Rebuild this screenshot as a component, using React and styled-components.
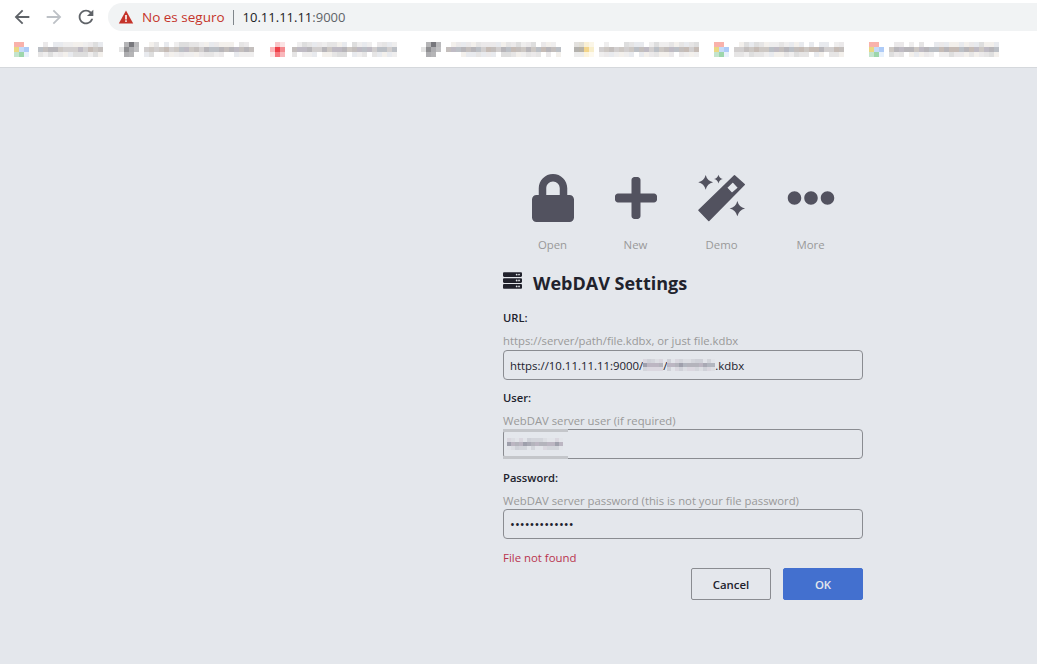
import React from "react";
import styled, { createGlobalStyle } from "styled-components";
import { FaLock, FaPlus, FaEllipsisH, FaServer } from "react-icons/fa";

const GlobalStyle = createGlobalStyle`
  html, body {
    margin: 0;
    padding: 0;
    height: 100%;
    overflow: hidden;
    background: #e4e7ec;
    font-family: "Open Sans", "Noto Sans", sans-serif;
  }
`;

const Page = styled.div`
  width: 1037px;
  height: 664px;
  display: flex;
  flex-direction: column;
  background: #e4e7ec;
`;

const Toolbar = styled.div`
  height: 31px;
  padding-top: 3px;
  box-sizing: border-box;
  display: flex;
  align-items: stretch;
  background: #fff;
`;

const NavIcons = styled.div`
  width: 108px;
  flex: none;
  display: flex;
  align-items: center;
  gap: 10px;
  padding: 0 0 0 11px;
  box-sizing: border-box;
`;

const NavIcon = styled.svg`
  width: 22px;
  height: 22px;
  fill: ${(p) => p.$color || "#5f6368"};
`;

const AddressBar = styled.div`
  flex: 1;
  display: flex;
  align-items: center;
  background: #f1f3f4;
  border-radius: 14px 0 0 14px;
  padding-left: 10px;
  font-size: 13px;
`;

const WarnIcon = styled.svg`
  width: 16px;
  height: 16px;
  margin-right: 8px;
`;

const NotSecure = styled.span`
  color: #c5332a;
  font-size: 13.5px;
`;

const Divider = styled.span`
  width: 1px;
  height: 15px;
  background: #80868b;
  margin: 0 9px 0 8px;
`;

const Host = styled.span`
  color: #202124;
`;

const Port = styled.span`
  color: #5f6368;
`;

const Bookmarks = styled.div`
  height: 37px;
  box-sizing: border-box;
  display: flex;
  align-items: center;
  background: #fff;
  border-bottom: 1px solid #d5d8dc;
  padding-left: 14px;
`;

const Bookmark = styled.div`
  display: flex;
  align-items: center;
  gap: ${(p) => p.$gap}px;
  width: ${(p) => p.$width}px;
  flex: none;
`;

const Mosaic = styled.div`
  display: grid;
  flex: none;
  grid-template-columns: repeat(${(p) => p.$cols}, ${(p) => p.$cell}px);
  grid-auto-rows: ${(p) => p.$cell}px;
`;

const Main = styled.main`
  flex: 1;
  display: flex;
  justify-content: flex-start;
  padding: 106px 0 0 503px;
  box-sizing: border-box;
`;

const Panel = styled.div`
  width: 360px;
  display: flex;
  flex-direction: column;
`;

const Actions = styled.div`
  display: flex;
  justify-content: center;
  gap: 41px;
`;

const Action = styled.div`
  width: ${(p) => p.$width}px;
  display: flex;
  flex-direction: column;
  align-items: center;
  color: #52525f;
  svg {
    width: ${(p) => p.$width}px;
    height: 48px;
    display: block;
  }
`;

const ActionLabel = styled.div`
  margin-top: 15px;
  font-size: 11.4px;
  line-height: 16px;
  color: #999;
  white-space: nowrap;
`;

const Heading = styled.h1`
  margin: 15px 0 0;
  display: flex;
  align-items: center;
  gap: 11px;
  font-size: 18px;
  line-height: 30px;
  font-weight: 700;
  color: #21222c;
  svg {
    font-size: 19px;
    margin-top: -5px;
  }
`;

const Label = styled.div`
  margin-top: ${(p) => p.$top}px;
  font-size: 11.2px;
  line-height: 16px;
  font-weight: 600;
  color: #21222c;
`;

const Hint = styled.div`
  margin: 7px 0 ${(p) => p.$bottom || 0}px;
  font-size: 11.3px;
  line-height: 16px;
  color: #999;
`;

const Field = styled.div`
  position: relative;
  height: 30px;
  box-sizing: border-box;
  display: flex;
  align-items: center;
  padding: 0 6px;
  border: 1px solid #8a8c91;
  border-radius: 4px;
  font-size: 11.4px;
  color: #21222c;
`;

const PasswordField = styled(Field)`
  font-size: 13px;
`;

const BorderSmudge = styled.div`
  position: absolute;
  left: -1px;
  ${(p) => (p.$bottom ? "bottom: -1px;" : "top: -1px;")}
  width: 65px;
  height: 3px;
  background: #c4c6ca;
`;

const UserBlur = styled.div`
  margin-left: -3px;
`;

const ErrorText = styled.div`
  margin-top: 11px;
  font-size: 11.4px;
  line-height: 16px;
  color: #b9344e;
`;

const Buttons = styled.div`
  margin-top: 2px;
  display: flex;
  justify-content: flex-end;
  gap: 12px;
`;

const Button = styled.button`
  width: 80px;
  height: 32px;
  box-sizing: border-box;
  padding: 0;
  border-radius: 2px;
  border: 1px solid ${(p) => (p.$primary ? "#4370cf" : "#8a8c91")};
  background: ${(p) => (p.$primary ? "#4370cf" : "transparent")};
  color: ${(p) => (p.$primary ? "#e4e7ec" : "#21222c")};
  font-family: inherit;
  font-size: 11.4px;
  font-weight: 600;
`;

// little seeded generator, so the pixelated bits look the same on every run
function makeCells(seed, cols, strong, faint) {
  const cells = [];
  let s = seed;
  for (let i = 0; i < cols * 3; i++) {
    s = (s * 16807) % 2147483647;
    const middle = i >= cols && i < cols * 2;
    const list = middle ? strong : faint;
    cells.push(list[s % list.length]);
  }
  return cells;
}

const barStrong = ["#c4bfbd", "#b8b6ba", "#cdc8c4", "#bcc0c6", "#c6bcb6", "#d2cfcf", "#bfbbc4"];
const barFaint = ["#fff", "#efeeee", "#e6e5e5", "#dedede", "#f3f0ec", "#e8eaee", "#ebe9ea"];
const fieldStrong = ["#a9a9b4", "#b4b4bc", "#9fa0ac", "#bcb6c2", "#b2b6bf"];
const fieldFaint = ["#dcdee3", "#d3d5db", "#e2e4e9", "#cfd1d8", "#dad7df"];

function TextBlur({ seed, cols, cell = 5, strong = barStrong, faint = barFaint }) {
  return (
    <Mosaic $cols={cols} $cell={cell}>
      {makeCells(seed, cols, strong, faint).map((c, i) => (
        <div key={i} style={{ background: c }} />
      ))}
    </Mosaic>
  );
}

function Favicon({ colors }) {
  return (
    <Mosaic $cols={colors.length / 3} $cell={5}>
      {colors.map((c, i) => (
        <div key={i} style={{ background: c }} />
      ))}
    </Mosaic>
  );
}

function WandIcon() {
  return (
    <svg viewBox="0 0 50 50">
      <path
        fillRule="evenodd"
        stroke="currentColor"
        strokeWidth="1.5"
        strokeLinejoin="round"
        d="M1 37.7L11.3 48.5 48.2 11 38 1.8zM29.7 14.3L36.3 7.7 42.3 14.3 35.3 20.3z"
        fill="currentColor"
      />
      <path d="M8 1Q9.6 7.1 15.7 8.7 9.6 10.3 8 16.4 6.4 10.3 .3 8.7 6.4 7.1 8 1z" fill="currentColor" />
      <path d="M21.3 .8Q22.2 4.4 25.8 5.3 22.2 6.2 21.3 9.8 20.4 6.2 16.8 5.3 20.4 4.4 21.3 .8z" fill="currentColor" />
      <path d="M41 28Q42.6 34.4 49 36 42.6 37.6 41 44 39.4 37.6 33 36 39.4 34.4 41 28z" fill="currentColor" />
    </svg>
  );
}

const appsIcon = ["#f9b2ab", "#f9b2ab", "#fff", "#e9d883", "#c5daf8", "#aecbf7", "#c4e4cc", "#9dd6ab", "#e8f1fb"];
const greyIcon = ["#fff", "#b5b5b7", "#77777c", "#b9b9bb", "#e4e4e4", "#8e8e91", "#adadb0", "#c0c0c2", "#fff", "#adadb0", "#b5b5b7", "#fff"];
const redIcon = ["#fff", "#f9c6c9", "#fbe3e4", "#fbb7bb", "#ef4048", "#f48a8f", "#fde5e6", "#f7777d", "#f9b7bb"];
const yellowIcon = ["#e3e1de", "#e2dfd5", "#f9f0d6", "#fbf6e7", "#b4b2ae", "#b7b2a6", "#f3d58b", "#f8eecb", "#ececec", "#ececec", "#fbf3dc", "#fdf9ee"];

const marks = [
  { icon: appsIcon, seed: 11, cols: 13, gap: 9, width: 105 },
  { icon: greyIcon, seed: 29, cols: 22, gap: 5, width: 151 },
  { icon: redIcon, seed: 47, cols: 21, gap: 7, width: 151 },
  { icon: greyIcon, seed: 83, cols: 23, gap: 5, width: 153 },
  { icon: yellowIcon, seed: 101, cols: 20, gap: 5, width: 140 },
  { icon: appsIcon, seed: 131, cols: 22, gap: 5, width: 155 },
  { icon: appsIcon, seed: 173, cols: 22, gap: 5, width: 130 },
];

function App() {
  return (
    <Page>
      <GlobalStyle />
      <Toolbar>
        <NavIcons>
          <NavIcon viewBox="0 0 24 24">
            <path d="M20 11H7.83l5.59-5.59L12 4l-8 8 8 8 1.41-1.41L7.83 13H20v-2z" />
          </NavIcon>
          <NavIcon viewBox="0 0 24 24" $color="#bdc1c6">
            <path d="M12 4l-1.41 1.41L16.17 11H4v2h12.17l-5.58 5.59L12 20l8-8z" />
          </NavIcon>
          <NavIcon viewBox="0 0 24 24">
            <path d="M17.65 6.35C16.2 4.9 14.21 4 12 4c-4.42 0-7.99 3.58-7.99 8s3.57 8 7.99 8c3.73 0 6.84-2.55 7.73-6h-2.08c-.82 2.33-3.04 4-5.65 4-3.31 0-6-2.69-6-6s2.69-6 6-6c1.66 0 3.14.69 4.22 1.78L13 11h7V4l-2.35 2.35z" />
          </NavIcon>
        </NavIcons>
        <AddressBar>
          <WarnIcon viewBox="0 0 16 16">
            <path d="M0.8 14.5h14.4L8 1.6z" fill="#c5332a" />
            <rect x="7.2" y="6" width="1.6" height="4.5" fill="#fff" />
            <rect x="7.2" y="11.3" width="1.6" height="1.6" fill="#fff" />
          </WarnIcon>
          <NotSecure>No es seguro</NotSecure>
          <Divider />
          <Host>10.11.11.11</Host>
          <Port>:9000</Port>
        </AddressBar>
      </Toolbar>
      <Bookmarks>
        {marks.map((m) => (
          <Bookmark key={m.seed} $gap={m.gap} $width={m.width}>
            <Favicon colors={m.icon} />
            <TextBlur seed={m.seed} cols={m.cols} />
          </Bookmark>
        ))}
      </Bookmarks>
      <Main>
        <Panel>
          <Actions>
            <Action $width={42}>
              <FaLock />
              <ActionLabel>Open</ActionLabel>
            </Action>
            <Action $width={42}>
              <FaPlus />
              <ActionLabel>New</ActionLabel>
            </Action>
            <Action $width={48}>
              <WandIcon />
              <ActionLabel>Demo</ActionLabel>
            </Action>
            <Action $width={48}>
              <FaEllipsisH />
              <ActionLabel>More</ActionLabel>
            </Action>
          </Actions>
          <Heading>
            <FaServer />
            WebDAV Settings
          </Heading>
          <Label $top={12}>URL:</Label>
          <Hint $bottom={1}>https://server/path/file.kdbx, or just file.kdbx</Hint>
          <Field>
            https://10.11.11.11:9000/
            <TextBlur seed={7} cols={5} cell={4} strong={fieldStrong} faint={fieldFaint} />/
            <TextBlur seed={19} cols={12} cell={4} strong={fieldStrong} faint={fieldFaint} />
            .kdbx
          </Field>
          <Label $top={10}>User:</Label>
          <Hint>WebDAV server user (if required)</Hint>
          <Field>
            <BorderSmudge />
            <BorderSmudge $bottom />
            <UserBlur>
              <TextBlur seed={37} cols={14} cell={4} strong={fieldStrong} faint={fieldFaint} />
            </UserBlur>
          </Field>
          <Label $top={11}>Password:</Label>
          <Hint>WebDAV server password (this is not your file password)</Hint>
          <PasswordField>•••••••••••••</PasswordField>
          <ErrorText>File not found</ErrorText>
          <Buttons>
            <Button>Cancel</Button>
            <Button $primary>OK</Button>
          </Buttons>
        </Panel>
      </Main>
    </Page>
  );
}

export default App;
